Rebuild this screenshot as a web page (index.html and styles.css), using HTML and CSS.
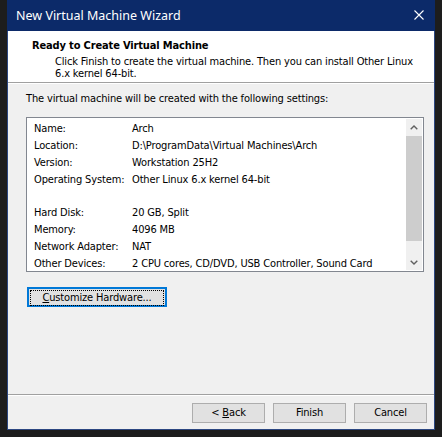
FILE: index.html
```html
<!DOCTYPE html>
<html lang="en">
<head>
<meta charset="utf-8">
<title>New Virtual Machine Wizard</title>
<link rel="stylesheet" href="styles.css">
</head>
<body>
<div class="window">
  <div class="titlebar">
    <span class="title">New Virtual Machine Wizard</span>
    <svg class="close" width="10" height="10" viewBox="0 0 10 10">
      <path d="M0.5 0.5 L9.5 9.5 M9.5 0.5 L0.5 9.5" stroke="#ffffff" stroke-width="1.1" fill="none"/>
    </svg>
  </div>

  <div class="header">
    <div class="heading">Ready to Create Virtual Machine</div>
    <div class="subtext">Click Finish to create the virtual machine. Then you can install Other Linux 6.x kernel 64-bit.</div>
  </div>

  <div class="content">
    <div class="intro">The virtual machine will be created with the following settings:</div>

    <div class="listbox">
      <div class="rows">
        <div class="row"><span class="label">Name:</span><span class="value">Arch</span></div>
        <div class="row"><span class="label">Location:</span><span class="value">D:\ProgramData\Virtual Machines\Arch</span></div>
        <div class="row"><span class="label">Version:</span><span class="value">Workstation 25H2</span></div>
        <div class="row"><span class="label">Operating System:</span><span class="value">Other Linux 6.x kernel 64-bit</span></div>
        <div class="row"></div>
        <div class="row"><span class="label">Hard Disk:</span><span class="value">20 GB, Split</span></div>
        <div class="row"><span class="label">Memory:</span><span class="value">4096 MB</span></div>
        <div class="row"><span class="label">Network Adapter:</span><span class="value">NAT</span></div>
        <div class="row"><span class="label">Other Devices:</span><span class="value">2 CPU cores, CD/DVD, USB Controller, Sound Card</span></div>
      </div>
      <div class="scrollbar">
        <div class="sb-btn">
          <svg width="8" height="5" viewBox="0 0 8 5"><path d="M0.7 4.3 L4 1 L7.3 4.3" stroke="#606060" stroke-width="1.4" fill="none"/></svg>
        </div>
        <div class="sb-track"><div class="sb-thumb"></div></div>
        <div class="sb-btn">
          <svg width="8" height="5" viewBox="0 0 8 5"><path d="M0.7 0.7 L4 4 L7.3 0.7" stroke="#606060" stroke-width="1.4" fill="none"/></svg>
        </div>
      </div>
    </div>

    <div class="custom-row">
      <button class="btn btn-default"><span class="focus"><u>C</u>ustomize Hardware...</span></button>
    </div>
  </div>

  <div class="footer">
    <button class="btn">&lt; <u>B</u>ack</button>
    <button class="btn">Finish</button>
    <button class="btn">Cancel</button>
  </div>
</div>
</body>
</html>
```

FILE: styles.css
```css
html, body {
  margin: 0;
  padding: 0;
}

body {
  width: 442px;
  height: 437px;
  background: #1d1d1d;
  font-family: "DejaVu Sans Condensed", "DejaVu Sans", sans-serif;
  font-stretch: condensed;
  font-size: 11px;
  letter-spacing: -0.15px;
  color: #000;
  overflow: hidden;
}

.window {
  margin-left: 7px;
  width: 428px;
  height: 430px;
  box-sizing: border-box;
  border: 1px solid #2c4781;
  border-top: none;
  background: #f0f0f0;
  display: flex;
  flex-direction: column;
}

/* title bar */
.titlebar {
  height: 31px;
  flex: none;
  background: #0c2a69;
  color: #fff;
  display: flex;
  align-items: center;
  justify-content: space-between;
  padding: 0 10px 0 8px;
  margin: 0 -1px;
  border-left: 1px solid #0c2a69;
  border-right: 1px solid #0c2a69;
}

.title {
  font-family: "Noto Sans", "Open Sans", sans-serif;
  font-stretch: normal;
  letter-spacing: 0;
  font-size: 12.5px;
  padding-bottom: 1px;
}

.close {
  display: block;
  margin-bottom: 1px;
}

/* white header band */
.header {
  flex: none;
  height: 52px;
  box-sizing: border-box;
  background: #fff;
  border-bottom: 1px solid #a0a0a0;
  padding: 8px 0 0 24px;
}

.heading {
  font-weight: bold;
  line-height: 13px;
}

.subtext {
  margin: 4px 0 0 23px;
  width: 372px;
  line-height: 12px;
}

/* main area */
.content {
  flex: 1;
  border-top: 1px solid #fff;
  padding: 8px 10px 0 18px;
}

.intro {
  line-height: 13px;
}

.listbox {
  margin-top: 12px;
  width: 398px;
  height: 155px;
  box-sizing: border-box;
  border: 1px solid #828790;
  background: #fff;
  padding: 1px;
  display: flex;
}

.rows {
  flex: 1;
  padding: 2px 0 0 6px;
}

.row {
  display: flex;
  height: 16.875px;
  line-height: 16.875px;
  white-space: nowrap;
}

.label {
  width: 98px;
  flex: none;
}

.scrollbar {
  width: 16px;
  flex: none;
  background: #f0f0f0;
  display: flex;
  flex-direction: column;
}

.sb-btn {
  height: 16px;
  flex: none;
  display: flex;
  align-items: center;
  justify-content: center;
}

.sb-track {
  flex: 1;
  padding-top: 1px;
}

.sb-thumb {
  height: 105px;
  background: #cdcdcd;
}

.custom-row {
  margin-top: 15px;
  padding-left: 1px;
}

/* buttons */
.btn {
  font: inherit;
  letter-spacing: inherit;
  color: #000;
  background: #e1e1e1;
  border: 1px solid #adadad;
  box-sizing: border-box;
  width: 73px;
  height: 20px;
  padding: 0;
  margin: 0;
  line-height: 16px;
}

.btn-default {
  width: 140px;
  border: 2px solid #0078d7;
  padding: 1px;
  display: block;
}

.btn-default .focus {
  display: block;
  height: 14px;
  line-height: 13px;
  border: 1px dotted #000;
}

.footer {
  flex: none;
  height: 35px;
  box-sizing: border-box;
  border-top: 1px solid #a0a0a0;
  box-shadow: inset 0 1px 0 #fff;
  display: flex;
  justify-content: flex-end;
  gap: 8px;
  padding: 8px 7px 0 0;
}
```
